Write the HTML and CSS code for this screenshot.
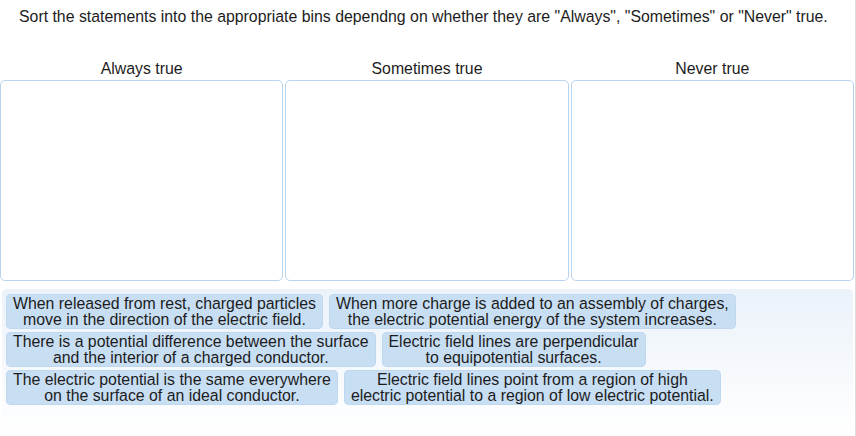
FILE: index.html
```html
<!DOCTYPE html>
<html lang="en">
<head>
  <meta charset="UTF-8">
  <meta name="viewport" content="width=device-width, initial-scale=1.0">
  <title>Sorting bins</title>
  <link rel="stylesheet" href="styles.css">
</head>
<body>
  <div class="page">
    <p class="prompt">Sort the statements into the appropriate bins dependng on whether they are "Always", "Sometimes" or "Never" true.</p>

    <!-- Drop targets -->
    <div class="bins">
      <div class="bin-col">
        <div class="bin-label">Always true</div>
        <div class="bin"></div>
      </div>
      <div class="bin-col">
        <div class="bin-label">Sometimes true</div>
        <div class="bin"></div>
      </div>
      <div class="bin-col">
        <div class="bin-label">Never true</div>
        <div class="bin"></div>
      </div>
    </div>

    <!-- Statements still to sort -->
    <div class="tray">
      <div class="item">When released from rest, charged particles<br>move in the direction of the electric field.</div>
      <div class="item">When more charge is added to an assembly of charges,<br>the electric potential energy of the system increases.</div>
      <div class="item">There is a potential difference between the surface<br>and the interior of a charged conductor.</div>
      <div class="item">Electric field lines are perpendicular<br>to equipotential surfaces.</div>
      <div class="item">The electric potential is the same everywhere<br>on the surface of an ideal conductor.</div>
      <div class="item">Electric field lines point from a region of high<br>electric potential to a region of low electric potential.</div>
    </div>
  </div>
</body>
</html>
```

FILE: styles.css
```css
body {
  margin: 0;
  font-family: "Liberation Sans", Arial, sans-serif;
  font-size: 15.85px;
  color: #1c1c1c;
  background: #fff;
}
.page {
  width: 855px;
  min-height: 100vh;
  border-right: 1px solid #dcdcdc;
}
.prompt {
  margin: 0;
  padding: 9px 19px 0;
  line-height: 16px;
}
.bins {
  display: grid;
  grid-template-columns: repeat(3, 1fr);
  gap: 2px;
  width: 854px;
  margin-top: 36px;
}
.bin-label {
  text-align: center;
  line-height: 16px;
  margin-bottom: 3px;
}
.bin {
  height: 199px;
  border: 1px solid #b9d4ee;
  border-radius: 5px;
}
.tray {
  display: flex;
  flex-wrap: wrap;
  align-items: flex-start;
  gap: 3px 6px;
  width: 843px;
  margin: 8px 0 0 2px;
  padding: 5px 4px 30px;
  border-radius: 5px;
  background: linear-gradient(to bottom, #ebf2fa, #ffffff);
}
.item {
  padding: 2px 7px 1px;
  line-height: 16px;
  text-align: center;
  background: #c8def3;
  border-radius: 5px;
  box-shadow: inset 0 0 0 1px #bfd7ef;
}
```
